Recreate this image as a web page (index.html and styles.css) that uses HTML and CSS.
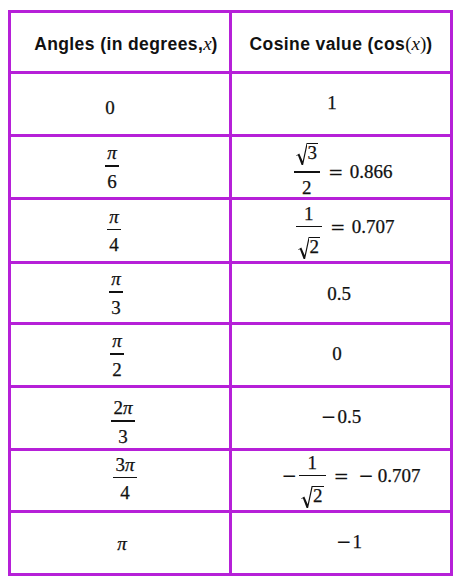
FILE: index.html
```html
<!DOCTYPE html>
<html>
<head>
<meta charset="utf-8">
<link rel="stylesheet" href="styles.css">
</head>
<body>
<div class="table">
  <div class="cell head"><span class="sx-p6">Angles (in degrees,<span class="mi">x</span>)</span></div>
  <div class="cell head"><span>Cosine value (cos<span class="mrm">(<span class="mi">x</span>)</span>)</span></div>

  <div class="cell"><span class="m sx-n10 sy-p3">0</span></div>
  <div class="cell"><span class="m sx-n9 sy-n2">1</span></div>

  <div class="cell"><span class="m expr sx-n8"><span class="num"><i>π</i></span><span class="bar"></span><span class="den">6</span></span></div>
  <div class="cell"><span class="m expr sx-p2 sy-p3"><span class="num rnum"><span class="sqrt"><svg class="radic" viewBox="0 0 11.5 22" width="11.5" height="22"><path d="M0.2 12.4 L3.3 10.6 L6.7 18.2 L10.6 0 L11.5 0 L11.5 1.4 L7.1 22 L5.6 22 L1.9 12.3 L0.6 13.1 Z"/></svg><span class="radicand">3</span></span></span><span class="bar"></span><span class="den">2</span><span class="rest"><span class="op">=</span>0.866</span></span></div>

  <div class="cell"><span class="m expr sx-n6"><span class="num"><i>π</i></span><span class="bar"></span><span class="den">4</span></span></div>
  <div class="cell"><span class="m expr sx-p4 sy-p1"><span class="num">1</span><span class="bar"></span><span class="den rden"><span class="sqrt"><svg class="radic" viewBox="0 0 11.5 22" width="11.5" height="22"><path d="M0.2 12.4 L3.3 10.6 L6.7 18.2 L10.6 0 L11.5 0 L11.5 1.4 L7.1 22 L5.6 22 L1.9 12.3 L0.6 13.1 Z"/></svg><span class="radicand">2</span></span></span><span class="rest"><span class="op">=</span>0.707</span></span></div>

  <div class="cell"><span class="m expr sx-n4"><span class="num"><i>π</i></span><span class="bar"></span><span class="den">3</span></span></div>
  <div class="cell"><span class="m sx-n2">0.5</span></div>

  <div class="cell"><span class="m expr sx-n3"><span class="num"><i>π</i></span><span class="bar"></span><span class="den">2</span></span></div>
  <div class="cell"><span class="m sx-n4 sy-n2">0</span></div>

  <div class="cell"><span class="m expr sx-p3 sy-p4"><span class="num">2<i>π</i></span><span class="bar"></span><span class="den">3</span></span></div>
  <div class="cell"><span class="m sy-n2"><span class="op">−</span>0.5</span></div>

  <div class="cell"><span class="m expr sx-p5 sy-n2"><span class="num">3<i>π</i></span><span class="bar"></span><span class="den">4</span></span></div>
  <div class="cell"><span class="m expr sx-p10"><span class="pre"><span class="op">−</span></span><span class="num">1</span><span class="bar"></span><span class="den rden"><span class="sqrt"><svg class="radic" viewBox="0 0 11.5 22" width="11.5" height="22"><path d="M0.2 12.4 L3.3 10.6 L6.7 18.2 L10.6 0 L11.5 0 L11.5 1.4 L7.1 22 L5.6 22 L1.9 12.3 L0.6 13.1 Z"/></svg><span class="radicand">2</span></span></span><span class="rest"><span class="op">=</span><span class="op op-l">−</span>0.707</span></span></div>

  <div class="cell"><span class="m sx-p2"><i>π</i></span></div>
  <div class="cell"><span class="m sx-p8 sy-n2"><span class="op">−</span>1</span></div>
</div>
</body>
</html>
```
FILE: styles.css
```css
html, body {
  margin: 0;
  padding: 0;
  background: #ffffff;
}

.table {
  display: grid;
  grid-template-columns: 218px 218px;
  grid-template-rows: 58px 60px 60px 61px 58px 60px 60px 59px 60px;
  gap: 3px;
  padding: 3px;
  background: #b620d8;
  width: max-content;
  margin: 10px 0 0 8px;
}

.cell {
  background: #ffffff;
  display: flex;
  align-items: center;
  justify-content: center;
  color: #111111;
}

.head {
  font-family: "Liberation Sans", Arial, sans-serif;
  font-weight: bold;
  font-size: 17.5px;
  letter-spacing: 0.4px;
  white-space: nowrap;
  padding-top: 4px;
}

.mi {
  font-family: "Liberation Serif", serif;
  font-style: italic;
  font-weight: normal;
  font-size: 19px;
  letter-spacing: 0;
}

.mrm {
  font-family: "Liberation Serif", serif;
  font-weight: normal;
  font-size: 19px;
  letter-spacing: 0;
}

.m {
  font-family: "Liberation Serif", serif;
  font-size: 19px;
  line-height: 19px;
  white-space: nowrap;
  display: inline-flex;
  align-items: baseline;
  -webkit-text-stroke: 0.25px #111111;
}

.m i {
  font-style: italic;
}

.op {
  font-family: "DejaVu Sans", sans-serif;
  font-size: 18.5px;
  margin: 0 1px 0 0;
  -webkit-text-stroke: 0;
}

.rest .op {
  margin: 0 6px 0 8px;
}

.rest .op-l {
  margin: 0 4px 0 3px;
}

.expr {
  display: inline-grid;
  grid-template-columns: auto auto auto;
  align-items: center;
}

.num {
  grid-column: 2;
  grid-row: 1;
  justify-self: center;
  display: flex;
  align-items: flex-end;
  padding: 0 2px 3px;
}

.rnum {
  padding-bottom: 6px;
}

.bar {
  grid-column: 2;
  grid-row: 2;
  height: 1.3px;
  background: #111111;
  align-self: stretch;
}

.den {
  grid-column: 2;
  grid-row: 3;
  justify-self: center;
  display: flex;
  padding: 5px 2px 0;
}

.rden {
  padding-top: 10px;
}

.pre {
  grid-column: 1;
  grid-row: 2;
  height: 0;
  display: flex;
  align-items: center;
  margin-right: 1px;
}

.rest {
  grid-column: 3;
  grid-row: 2;
  height: 0;
  display: flex;
  align-items: center;
  white-space: nowrap;
}

.sqrt {
  display: inline-flex;
  align-items: flex-start;
}

.radic {
  display: block;
  fill: #111111;
}

.radicand {
  border-top: 1.3px solid #111111;
  line-height: 17px;
  padding: 0 1px 0 1px;
  margin-left: -0.5px;
}

.sx-p2 { transform: translateX(2px); }
.sx-p3 { transform: translateX(3px); }
.sx-p4 { transform: translateX(4px); }
.sx-p5 { transform: translateX(5px); }
.sx-p6 { transform: translateX(6px); }
.sx-p8 { transform: translateX(8px); }
.sx-p10 { transform: translateX(10px); }
.sx-n2 { transform: translateX(-2px); }
.sx-n3 { transform: translateX(-3px); }
.sx-n4 { transform: translateX(-4px); }
.sx-n6 { transform: translateX(-6px); }
.sx-n8 { transform: translateX(-8px); }
.sx-n9 { transform: translateX(-9px); }
.sx-n10 { transform: translateX(-10px); }

.sy-p1 { margin-top: 2px; }
.sy-p3 { margin-top: 6px; }
.sy-p4 { margin-top: 8px; }
.sy-n2 { margin-bottom: 4px; }
```
